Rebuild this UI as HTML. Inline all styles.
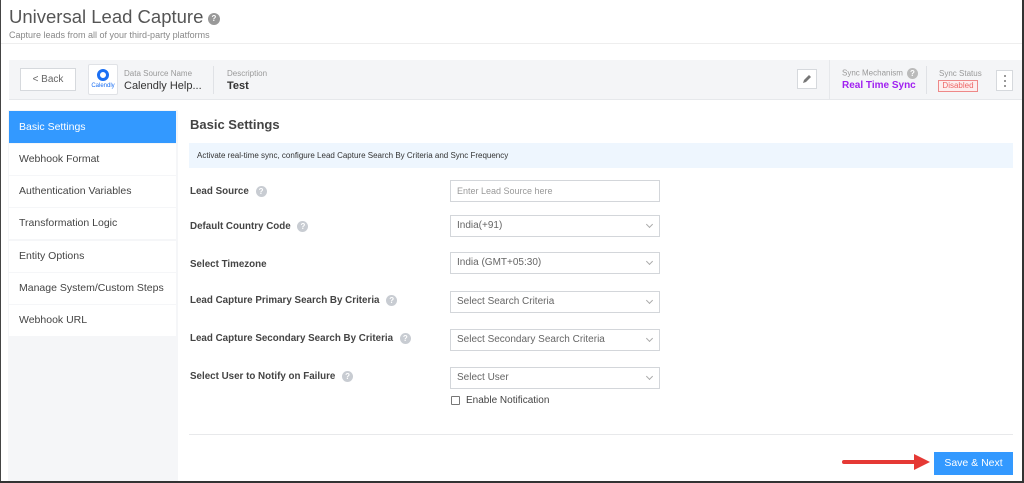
<!DOCTYPE html>
<html><head><style>
*{box-sizing:border-box;margin:0;padding:0}
body{width:1024px;height:483px;background:#fff;font-family:"Liberation Sans",sans-serif;color:#333;position:relative;overflow:hidden}
.a{position:absolute}
.help{display:inline-block;width:11px;height:11px;border-radius:50%;background:#c8ccd2;color:#fff;font-size:8px;text-align:center;line-height:11px;font-weight:bold;vertical-align:middle;margin-left:4px}
.lbl{position:absolute;left:190px;font-size:9.8px;font-weight:bold;color:#444;white-space:nowrap}
.inp{position:absolute;left:450px;width:210px;height:22px;border:1px solid #d3d6da;font-size:10px;color:#666;padding-left:6px;line-height:20px;background:#fff}
.sel::after{content:"";position:absolute;right:7px;top:6px;width:4px;height:4px;border-right:1px solid #aaa;border-bottom:1px solid #aaa;transform:rotate(45deg)}
.nav{position:absolute;left:9px;width:167px;height:31px;background:#fff;font-size:10.5px;color:#444;padding-left:10px;line-height:31px}
</style></head><body>
<div class="a" style="left:9px;top:6px;font-size:18.5px;color:#555">Universal Lead Capture</div>
<div class="a" style="left:208px;top:10px"><span class="help" style="width:12px;height:12px;line-height:12px;background:#999;margin:0">?</span></div>
<div class="a" style="left:9px;top:30px;font-size:9px;color:#888">Capture leads from all of your third-party platforms</div>
<div class="a" style="left:0;top:43px;width:1024px;height:1px;background:#eee"></div>
<div class="a" style="left:9px;top:60px;width:1013px;height:40px;background:#f4f5f7;border-bottom:1px solid #e6e8eb"></div>
<div class="a" style="left:20px;top:68px;width:56px;height:23px;background:#fff;border:1px solid #d6d9dd;font-size:10px;color:#666;text-align:center;line-height:21px">&lt; Back</div>
<div class="a" style="left:88px;top:64px;width:30px;height:31px;background:#fff;border:1px solid #e0e2e6;border-radius:2px">
<div class="a" style="left:8px;top:4px;width:12px;height:12px;border-radius:50%;border:3px solid #1b6ff3"></div>
<div class="a" style="left:0;top:18px;width:28px;text-align:center;font-size:6px;color:#1b6ff3">Calendly</div></div>
<div class="a" style="left:124px;top:69px;font-size:8px;color:#999">Data Source Name</div>
<div class="a" style="left:124px;top:80px;font-size:11px;color:#333">Calendly Help...</div>
<div class="a" style="left:213px;top:66px;width:1px;height:28px;background:#e0e2e6"></div>
<div class="a" style="left:227px;top:69px;font-size:8px;color:#999">Description</div>
<div class="a" style="left:227px;top:80px;font-size:11px;color:#333;font-weight:bold">Test</div>
<div class="a" style="left:797px;top:69px;width:20px;height:20px;background:#fff;border:1px solid #d6d9dd">
<svg width="18" height="18" viewBox="0 0 18 18"><path d="M5 13l1-3 5-5 2 2-5 5z" fill="#777"/></svg></div>
<div class="a" style="left:829px;top:60px;width:1px;height:39px;background:#e6e8eb"></div>
<div class="a" style="left:842px;top:68px;font-size:8px;color:#999">Sync Mechanism<span class="help" style="background:#bbb">?</span></div>
<div class="a" style="left:842px;top:80px;font-size:10px;color:#a020f0;font-weight:bold">Real Time Sync</div>
<div class="a" style="left:926px;top:66px;width:1px;height:28px;background:#e0e2e6"></div>
<div class="a" style="left:939px;top:69px;font-size:8px;color:#999">Sync Status</div>
<div class="a" style="left:938px;top:80px;width:40px;height:12px;border:1px solid #e88;background:#fdeeee;font-size:8px;color:#e66;text-align:center;line-height:10px">Disabled</div>
<div class="a" style="left:996px;top:70px;width:17px;height:21px;background:#fff;border:1px solid #d6d9dd">
<div class="a" style="left:7px;top:4px;width:2px;height:2px;background:#999"></div>
<div class="a" style="left:7px;top:9px;width:2px;height:2px;background:#999"></div>
<div class="a" style="left:7px;top:14px;width:2px;height:2px;background:#999"></div></div>
<div class="a" style="left:8px;top:110px;width:170px;height:373px;background:#f5f6f8"></div>
<div class="nav" style="top:111px;background:#3399ff;color:#fff;height:32px;line-height:32px">Basic Settings</div>
<div class="nav" style="top:144px">Webhook Format</div>
<div class="nav" style="top:176px">Authentication Variables</div>
<div class="nav" style="top:208px">Transformation Logic</div>
<div class="nav" style="top:241px">Entity Options</div>
<div class="nav" style="top:273px">Manage System/Custom Steps</div>
<div class="nav" style="top:305px">Webhook URL</div>
<div class="a" style="left:190px;top:117px;font-size:13px;font-weight:bold;color:#444">Basic Settings</div>
<div class="a" style="left:189px;top:143px;width:824px;height:25px;background:#eef6fe;font-size:8px;color:#333;padding-left:8px;line-height:25px">Activate real-time sync, configure Lead Capture Search By Criteria and Sync Frequency</div>
<div class="lbl" style="top:186px">Lead Source <span class="help">?</span></div>
<div class="inp" style="top:180px;color:#999;font-size:9px">Enter Lead Source here</div>
<div class="lbl" style="top:221px">Default Country Code <span class="help">?</span></div>
<div class="inp sel" style="top:215px">India(+91)</div>
<div class="lbl" style="top:259px">Select Timezone</div>
<div class="inp sel" style="top:252px">India (GMT+05:30)</div>
<div class="lbl" style="top:295px">Lead Capture Primary Search By Criteria <span class="help">?</span></div>
<div class="inp sel" style="top:291px">Select Search Criteria</div>
<div class="lbl" style="top:333px">Lead Capture Secondary Search By Criteria <span class="help">?</span></div>
<div class="inp sel" style="top:329px">Select Secondary Search Criteria</div>
<div class="lbl" style="top:371px">Select User to Notify on Failure <span class="help">?</span></div>
<div class="inp sel" style="top:367px">Select User</div>
<div class="a" style="left:451px;top:396px;width:9px;height:9px;border:1px solid #777;border-radius:1px"></div>
<div class="a" style="left:466px;top:395px;font-size:10px;color:#444">Enable Notification</div>
<div class="a" style="left:189px;top:434px;width:824px;height:1px;background:#e8e9eb"></div>
<div class="a" style="left:934px;top:452px;width:79px;height:23px;background:#3399ff;color:#fff;font-size:10.5px;text-align:center;line-height:23px">Save &amp; Next</div>
<svg class="a" style="left:840px;top:452px" width="92" height="20"><line x1="4" y1="10" x2="78" y2="10" stroke="#e53935" stroke-width="4" stroke-linecap="round"/><path d="M74 2L90 10L74 18z" fill="#e53935"/></svg>
<div class="a" style="left:0;top:0;width:1px;height:483px;background:#444"></div>
<div class="a" style="left:1022px;top:0;width:2px;height:483px;background:#333"></div>
<div class="a" style="left:0;top:481px;width:1024px;height:2px;background:#333"></div>
</body></html>
